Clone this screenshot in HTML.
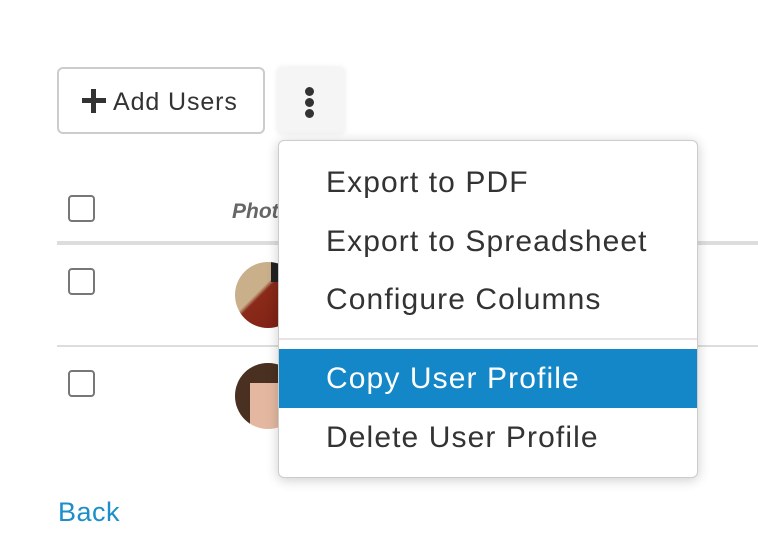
<!DOCTYPE html>
<html><head><style>
body{margin:0;width:758px;height:534px;background:#fff;position:relative;overflow:hidden;font-family:"Liberation Sans",sans-serif;color:#333}
.abs{position:absolute}
.cb{position:absolute;left:68px;width:23px;height:23px;border:2px solid #777;border-radius:4px;box-sizing:content-box}
.av{position:absolute;left:235px;width:66px;height:66px;border-radius:50%;overflow:hidden}
.menu{position:absolute;left:278px;top:140px;width:420px;height:338px;background:#fff;border:1px solid #ccc;border-radius:6px;box-shadow:0 2px 12px rgba(0,0,0,.2);box-sizing:border-box}
.it{position:absolute;left:47px;font-size:30px;letter-spacing:1.1px;color:#333;line-height:34px;white-space:nowrap}
</style></head><body>
<div class="abs" style="left:57px;top:67px;width:208px;height:67px;border:2px solid #ccc;border-radius:6px;box-sizing:border-box"></div>
<div class="abs" style="left:82px;top:98px;width:24px;height:5px;background:#333"></div>
<div class="abs" style="left:91px;top:89px;width:5px;height:24px;background:#333"></div>
<div class="abs" style="left:113px;top:87px;font-size:25px;letter-spacing:0.9px;line-height:30px;color:#333;">Add Users</div>
<div class="abs" style="left:277px;top:67px;width:68px;height:67px;background:#f5f5f5;border-radius:5px;box-shadow:0 0 6px rgba(0,0,0,.08)"></div>
<div class="abs" style="left:305px;top:87px;width:9px;height:9px;border-radius:50%;background:#333"></div>
<div class="abs" style="left:305px;top:98px;width:9px;height:9px;border-radius:50%;background:#333"></div>
<div class="abs" style="left:305px;top:109px;width:9px;height:9px;border-radius:50%;background:#333"></div>
<div class="cb" style="top:195px"></div>
<div class="abs" style="left:232px;top:200px;font-size:21px;font-style:italic;font-weight:bold;color:#666">Photo</div>
<div class="abs" style="left:57px;top:241px;width:701px;height:4px;background:#ddd"></div>
<div class="cb" style="top:268px"></div>
<div class="av" style="top:262px;background:linear-gradient(135deg,#c9b08a 0%,#c9b08a 40%,#8a2a1a 45%,#7a1e12 100%)"><div style="position:absolute;right:0;top:0;width:30px;height:20px;background:#222"></div></div>
<div class="abs" style="left:57px;top:345px;width:701px;height:2px;background:#ddd"></div>
<div class="cb" style="top:370px"></div>
<div class="av" style="top:363px;background:#e4b8a0"><div style="position:absolute;left:0;top:0;width:66px;height:20px;background:#4a3020"></div><div style="position:absolute;left:0;top:0;width:15px;height:66px;background:#4a3020"></div></div>
<div class="abs" style="left:58px;top:497px;font-size:27px;letter-spacing:0.5px;color:#1a8fc9">Back</div>
<div class="menu">
<div class="it" style="top:25px">Export to PDF</div>
<div class="it" style="top:84px">Export to Spreadsheet</div>
<div class="it" style="top:142px">Configure Columns</div>
<div class="abs" style="left:0;top:197px;width:418px;height:2px;background:#e5e5e5"></div>
<div class="abs" style="left:0;top:208px;width:418px;height:59px;background:#1387c8"></div>
<div class="it" style="top:221px;color:#fff">Copy User Profile</div>
<div class="it" style="top:280px">Delete User Profile</div>
</div>
</body></html>
